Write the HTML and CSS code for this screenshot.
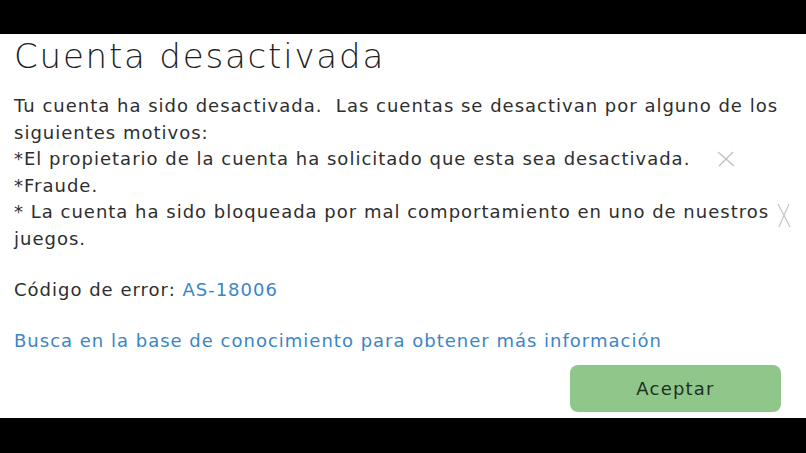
FILE: index.html
```html
<!DOCTYPE html>
<html lang="es">
<head>
<meta charset="utf-8">
<link rel="stylesheet" href="styles.css">
</head>
<body>
<div class="bar"></div>
<main class="dialog">
  <h1 class="title">Cuenta desactivada</h1>
  <div class="body">
    <p class="reasons">Tu cuenta ha sido desactivada.&nbsp; Las cuentas se desactivan por alguno de los siguientes motivos:<br>*El propietario de la cuenta ha solicitado que esta sea desactivada.<br>*Fraude.<br>* La cuenta ha sido bloqueada por mal comportamiento en uno de nuestros juegos.</p>
    <p class="code">Código de error: <span class="link">AS-18006</span></p>
    <p class="kb link">Busca en la base de conocimiento para obtener más información</p>
  </div>
  <div class="actions">
    <button class="accept">Aceptar</button>
  </div>
  <svg class="mark mark1" width="18" height="16" viewBox="0 0 18 16"><path d="M1 1 L17 15 M16 1 L2 15" stroke="#bdbdbd" stroke-width="1.2" fill="none"/></svg>
  <svg class="mark mark2" width="16" height="25" viewBox="0 0 16 25"><path d="M2 1 L14 24 M13 1 L3 24" stroke="#c4c4c4" stroke-width="1.2" fill="none"/></svg>
</main>
<div class="bar"></div>
</body>
</html>
```
FILE: styles.css
```css
html, body {
  margin: 0;
  padding: 0;
  background: #000;
  width: 806px;
  height: 453px;
  overflow: hidden;
}
.bar {
  height: 34px;
  background: #000;
}
.bar:last-child {
  height: 35px;
}
.dialog {
  position: relative;
  height: 384px;
  background: #fff;
  padding: 0 14px;
  box-sizing: border-box;
  font-family: "DejaVu Sans", sans-serif;
  color: #2e2e2e;
  display: flex;
  flex-direction: column;
}
.title {
  margin: 0;
  padding-top: 2px;
  font-size: 34px;
  font-weight: 200;
  line-height: 40px;
  color: #1e1e1e;
  letter-spacing: 1.8px;
}
.body {
  font-size: 18px;
  line-height: 26.5px;
  letter-spacing: 1px;
}
.body p {
  margin: 0;
}
.reasons {
  padding-top: 17px;
}
.code {
  margin-top: 25px !important;
}
.kb {
  margin-top: 24px !important;
}
.link {
  color: #3b86c6;
}
.actions {
  display: flex;
  justify-content: flex-end;
  padding-top: 11px;
  padding-right: 11px;
}
.accept {
  width: 211px;
  height: 47px;
  background: #8fc78b;
  border: none;
  border-radius: 8px;
  font-family: "DejaVu Sans", sans-serif;
  font-size: 18px;
  color: #1f2f1f;
  letter-spacing: 1.2px;
}
.mark {
  position: absolute;
}
.mark1 {
  left: 717px;
  top: 117px;
}
.mark2 {
  left: 776px;
  top: 169px;
}
```
